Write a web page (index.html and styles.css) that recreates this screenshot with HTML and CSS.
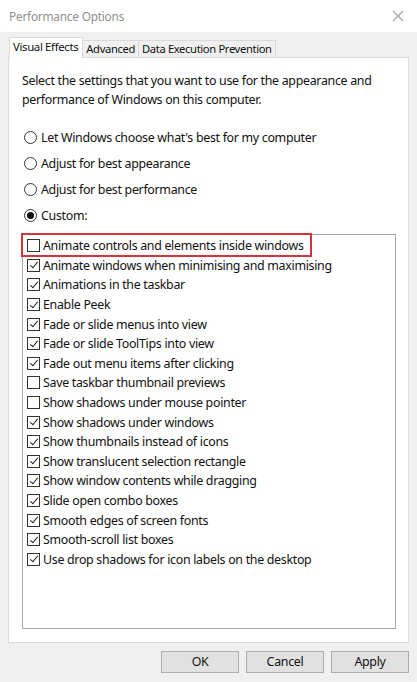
FILE: index.html
```html
<!DOCTYPE html>
<html>
<head>
<meta charset="utf-8">
<link rel="stylesheet" href="styles.css">
</head>
<body>
<div class="window">
  <div class="titlebar">
    <span class="title">Performance Options</span>
    <svg class="close" width="12" height="12" viewBox="0 0 12 12"><path d="M1 1 L11 11 M11 1 L1 11" stroke="#a0a0a0" stroke-width="1.1" fill="none"/></svg>
  </div>
  <div class="body">
    <div class="tabs">
      <div class="tab active">Visual Effects</div>
      <div class="tab">Advanced</div>
      <div class="tab">Data Execution Prevention</div>
    </div>
    <div class="panel">
      <p class="intro">Select the settings that you want to use for the appearance and performance of Windows on this computer.</p>
      <div class="radios">
        <div class="radio"><span class="dot"></span>Let Windows choose what's best for my computer</div>
        <div class="radio"><span class="dot"></span>Adjust for best appearance</div>
        <div class="radio"><span class="dot"></span>Adjust for best performance</div>
        <div class="radio"><span class="dot on"></span>Custom:</div>
      </div>
      <div class="list">
        <div class="highlight"></div>
        <div class="item"><span class="box"></span>Animate controls and elements inside windows</div>
        <div class="item"><span class="box on"></span>Animate windows when minimising and maximising</div>
        <div class="item"><span class="box on"></span>Animations in the taskbar</div>
        <div class="item"><span class="box on"></span>Enable Peek</div>
        <div class="item"><span class="box on"></span>Fade or slide menus into view</div>
        <div class="item"><span class="box on"></span>Fade or slide ToolTips into view</div>
        <div class="item"><span class="box on"></span>Fade out menu items after clicking</div>
        <div class="item"><span class="box"></span>Save taskbar thumbnail previews</div>
        <div class="item"><span class="box"></span>Show shadows under mouse pointer</div>
        <div class="item"><span class="box on"></span>Show shadows under windows</div>
        <div class="item"><span class="box on"></span>Show thumbnails instead of icons</div>
        <div class="item"><span class="box on"></span>Show translucent selection rectangle</div>
        <div class="item"><span class="box on"></span>Show window contents while dragging</div>
        <div class="item"><span class="box on"></span>Slide open combo boxes</div>
        <div class="item"><span class="box on"></span>Smooth edges of screen fonts</div>
        <div class="item"><span class="box on"></span>Smooth-scroll list boxes</div>
        <div class="item"><span class="box on"></span>Use drop shadows for icon labels on the desktop</div>
      </div>
    </div>
    <div class="buttons">
      <div class="btn">OK</div>
      <div class="btn">Cancel</div>
      <div class="btn">Apply</div>
    </div>
  </div>
</div>
</body>
</html>
```
FILE: styles.css
```css
* { box-sizing: border-box; }
html, body { margin: 0; padding: 0; }
body {
  width: 417px;
  height: 682px;
  background: #f0f0f0;
  font-family: "Noto Sans", "Open Sans", sans-serif;
  font-size: 12.4px;
  letter-spacing: -0.3px;
  color: #111;
  overflow: hidden;
}
.window { width: 417px; height: 682px; }
.titlebar {
  height: 32px;
  background: #fff;
  display: flex;
  align-items: center;
  justify-content: space-between;
  padding: 0 13px 0 9px;
}
.title { color: #8f8f8f; font-size: 11.8px; letter-spacing: -0.2px; }
.body { padding: 5px 8px 0 8px; }
.tabs {
  display: flex;
  align-items: flex-end;
  height: 20px;
  padding-left: 1px;
  font-size: 11.2px;
  letter-spacing: -0.35px;
}
.tab {
  height: 17px;
  line-height: 15px;
  padding: 0 3px;
  border: 1px solid #dadada;
  border-bottom: none;
  border-left: none;
  background: #f0f0f0;
}
.tab.active {
  height: 21px;
  line-height: 18px;
  background: #fff;
  border-left: 1px solid #dadada;
  padding: 0 4px 0 3px;
  position: relative;
  top: 1px;
  font-size: 11.4px;
}
.panel {
  background: #fff;
  border: 1px solid #dadada;
  height: 586px;
  padding: 13px 12px 0 13px;
}
.intro {
  margin: 0;
  line-height: 19px;
  width: 362px;
}
.radios { margin-top: 15px; }
.radio {
  height: 26px;
  display: flex;
  align-items: center;
}
.dot {
  width: 13px;
  height: 13px;
  border: 1px solid #333;
  border-radius: 50%;
  margin: 0 4px 0 2px;
  display: flex;
  align-items: center;
  justify-content: center;
}
.dot.on::after {
  content: "";
  width: 7px;
  height: 7px;
  border-radius: 50%;
  background: #111;
}
.list {
  position: relative;
  margin-top: 6px;
  border: 1px solid #a8a8a8;
  height: 395px;
  padding: 1px 0 0 4px;
}
.item {
  height: 19.6px;
  display: flex;
  align-items: center;
}
.box {
  width: 13px;
  height: 13px;
  border: 1px solid #333;
  margin-right: 3px;
  flex: none;
  position: relative;
}
.box.on::after {
  content: "";
  position: absolute;
  left: 3.5px;
  top: 0.5px;
  width: 3px;
  height: 7px;
  border-right: 1.2px solid #222;
  border-bottom: 1.2px solid #222;
  transform: rotate(40deg);
}
.highlight {
  position: absolute;
  left: -2px;
  top: -2px;
  width: 291px;
  height: 24px;
  border: 2px solid #d6333d;
}
.buttons {
  display: flex;
  justify-content: flex-end;
  gap: 7px;
  margin-top: 8px;
}
.btn {
  width: 78px;
  height: 22px;
  background: #e1e1e1;
  border: 1px solid #adadad;
  text-align: center;
  line-height: 20px;
}
```
